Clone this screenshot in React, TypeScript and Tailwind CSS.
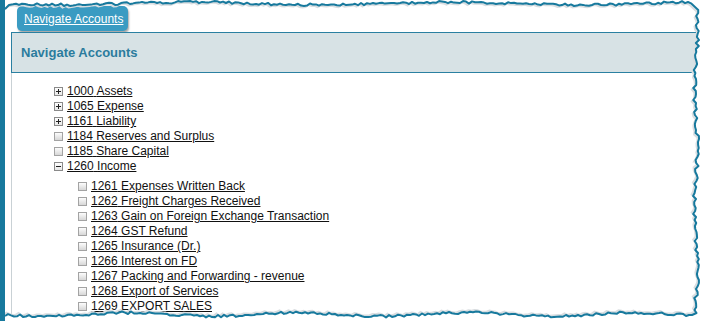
import React from 'react';

type Node = { code: string; name: string; kind: 'plus' | 'minus' | 'leaf'; children?: Node[] };

const tree: Node[] = [
  { code: '1000', name: 'Assets', kind: 'plus' },
  { code: '1065', name: 'Expense', kind: 'plus' },
  { code: '1161', name: 'Liability', kind: 'plus' },
  { code: '1184', name: 'Reserves and Surplus', kind: 'leaf' },
  { code: '1185', name: 'Share Capital', kind: 'leaf' },
  {
    code: '1260',
    name: 'Income',
    kind: 'minus',
    children: [
      { code: '1261', name: 'Expenses Written Back', kind: 'leaf' },
      { code: '1262', name: 'Freight Charges Received', kind: 'leaf' },
      { code: '1263', name: 'Gain on Foreign Exchange Transaction', kind: 'leaf' },
      { code: '1264', name: 'GST Refund', kind: 'leaf' },
      { code: '1265', name: 'Insurance (Dr.)', kind: 'leaf' },
      { code: '1266', name: 'Interest on FD', kind: 'leaf' },
      { code: '1267', name: 'Packing and Forwarding - revenue', kind: 'leaf' },
      { code: '1268', name: 'Export of Services', kind: 'leaf' },
      { code: '1269', name: 'EXPORT SALES', kind: 'leaf' },
      { code: '1270', name: 'DOMESTIC SALES', kind: 'leaf' },
    ],
  },
];

function NodeIcon({ kind }: { kind: Node['kind'] }) {
  return (
    <svg width="9" height="9" viewBox="0 0 9 9" className="shrink-0">
      <defs>
        <linearGradient id={`g-${kind}`} x1="0" y1="0" x2="0" y2="1">
          <stop offset="0" stopColor="#ffffff" />
          <stop offset="1" stopColor={kind === 'leaf' ? '#d4d4d4' : '#e6e6e6'} />
        </linearGradient>
      </defs>
      <rect x="0.5" y="0.5" width="8" height="8" fill={`url(#g-${kind})`} stroke={kind === 'leaf' ? '#a3a3a3' : '#8a8a8a'} />
      {kind !== 'leaf' && <rect x="2" y="4" width="5" height="1" fill="#222" />}
      {kind === 'plus' && <rect x="4" y="2" width="1" height="5" fill="#222" />}
    </svg>
  );
}

function TreeRow({ node }: { node: Node }) {
  return (
    <li>
      <div className="flex h-[15px] items-center gap-[4px]">
        <NodeIcon kind={node.kind} />
        <a className="text-[12px] leading-[15px] text-[#111] underline underline-offset-[1px]">
          {node.code} {node.name}
        </a>
      </div>
      {node.children && (
        <ul className="mt-[5px] pl-[24px]">
          {node.children.map((c) => (
            <TreeRow key={c.code} node={c} />
          ))}
        </ul>
      )}
    </li>
  );
}

function rng(seed: number) {
  let s = seed;
  return () => {
    s = (s * 1103515245 + 12345) % 2147483648;
    return s / 2147483648;
  };
}

function tornEdge() {
  const r = rng(11);
  const pts: [number, number][] = [];
  pts.push([5, 9]);
  pts.push([9, 5]);
  for (let x = 13; x <= 692; x += 3) {
    pts.push([x, 3.5 + (r() - 0.5) * 2.6 + Math.sin(x / 41) * 1.3]);
  }
  for (let y = 7; y <= 313; y += 3) {
    pts.push([696 + (r() - 0.5) * 3.6 + Math.sin(y / 19) * 1.6, y]);
  }
  for (let x = 692; x >= 8; x -= 3) {
    pts.push([x, 314.5 + (r() - 0.5) * 2.6 + Math.sin(x / 27) * 1.8]);
  }
  pts.push([5, 316]);
  return pts;
}

function TornFrame() {
  const pts = tornEdge();
  const poly = pts.map((p, i) => `${i === 0 ? 'M' : 'L'}${p[0].toFixed(1)} ${p[1].toFixed(1)}`).join(' ');
  const shadow = pts.map((p, i) => `${i === 0 ? 'M' : 'L'}${(p[0] - 1.5).toFixed(1)} ${(p[1] + (p[1] > 160 ? -1.5 : 1.5)).toFixed(1)}`).join(' ');
  return (
    <svg className="pointer-events-none absolute inset-0" width="702" height="321" viewBox="0 0 702 321">
      <path d={shadow} fill="none" stroke="#d9dde0" strokeWidth="2" />
      <path d={`M0 0H702V321H0Z ${poly} L5 0 Z`} fill="#ffffff" fillRule="evenodd" />
      <path d={poly} fill="none" stroke="#17799d" strokeWidth="2" strokeLinejoin="round" />
      <rect x="0" y="0" width="5" height="321" fill="#17799d" />
    </svg>
  );
}

export default function App() {
  return (
    <div className="relative h-[321px] w-[702px] overflow-hidden bg-white font-['Liberation_Sans',Arial,sans-serif]">
      <div className="pl-[11px] pt-[6px]">
        <div className="mb-px ml-[6px] flex h-[25px] w-[111px] items-center rounded-[5px] bg-[#3a9bc2] pl-[7px] shadow-[1px_2px_2px_rgba(0,0,0,0.35)]">
          <a className="text-[12px] leading-none text-white underline underline-offset-[1px]">Navigate Accounts</a>
        </div>
        <div className="h-[300px] border-l border-[#c9d1d5]">
          <div className="-ml-px flex h-[41px] items-center border border-r-0 border-[#2a80a1] bg-[#d7e2e5] pl-[9px]">
            <h2 className="text-[13px] font-bold text-[#2b7c9d]">Navigate Accounts</h2>
          </div>
          <ul className="pl-[42px] pt-[11px]">
            {tree.map((n) => (
              <TreeRow key={n.code} node={n} />
            ))}
          </ul>
        </div>
      </div>
      <TornFrame />
    </div>
  );
}
